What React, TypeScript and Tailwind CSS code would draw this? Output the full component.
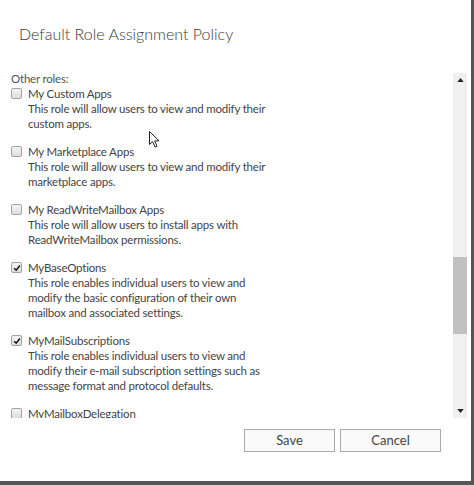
import React from 'react';

type Role = { name: string; lines: string[]; checked: boolean };

const roles: Role[] = [
  { name: 'My Custom Apps', lines: ['This role will allow users to view and modify their', 'custom apps.'], checked: false },
  { name: 'My Marketplace Apps', lines: ['This role will allow users to view and modify their', 'marketplace apps.'], checked: false },
  { name: 'My ReadWriteMailbox Apps', lines: ['This role will allow users to install apps with', 'ReadWriteMailbox permissions.'], checked: false },
  {
    name: 'MyBaseOptions',
    lines: ['This role enables individual users to view and', 'modify the basic configuration of their own', 'mailbox and associated settings.'],
    checked: true,
  },
  {
    name: 'MyMailSubscriptions',
    lines: ['This role enables individual users to view and', 'modify their e-mail subscription settings such as', 'message format and protocol defaults.'],
    checked: true,
  },
  { name: 'MyMailboxDelegation', lines: ['This role enables users to delegate mailbox', 'permissions.'], checked: false },
];

const Checkbox: React.FC<{ checked: boolean }> = ({ checked }) => (
  <span className="mt-[2px] flex h-[11px] w-[11px] shrink-0 items-center justify-center rounded-[2px] border border-[#a3a3a3] bg-gradient-to-b from-[#f4f4f4] to-[#dedede]">
    {checked && (
      <svg viewBox="0 0 10 10" className="h-[8px] w-[8px]">
        <path d="M1.5 5.2 L4 7.8 L8.6 1.8" fill="none" stroke="#111" strokeWidth={1.8} />
      </svg>
    )}
  </span>
);

const App: React.FC = () => {
  return (
    <div
      className="relative flex h-[485px] w-[474px] flex-col border-r-[3px] border-b-[4px] border-[#555] bg-white text-[#444]"
      style={{ fontFamily: 'Lato, "Open Sans", sans-serif' }}
    >
      {/* Title */}
      <div className="h-[73px] pl-[19px] pt-[24px]">
        <h1 className="text-[16px] font-light leading-[20px] text-[#3a3a3a]">Default Role Assignment Policy</h1>
      </div>

      {/* Scrolling list */}
      <div className="flex h-[345px]">
        <div className="flex-1 overflow-hidden pl-[11px] text-[11.5px] leading-[15px] tracking-[-0.2px]">
          <div className="-mt-[2px]">
            <p className="text-[#555]">Other roles:</p>
            <div className="flex flex-col gap-[13px]">
              {roles.map(role => (
                <div key={role.name} className="flex gap-[6px]">
                  <Checkbox checked={role.checked} />
                  <div>
                    <p>{role.name}</p>
                    {role.lines.map(line => (
                      <p key={line}>{line}</p>
                    ))}
                  </div>
                </div>
              ))}
            </div>
          </div>
        </div>

        {/* Scrollbar */}
        <div className="mr-[4px] flex w-[14px] flex-col bg-[#f0f0f0]">
          <div className="flex h-[14px] items-center justify-center">
            <svg viewBox="0 0 8 5" className="h-[4px] w-[7px]">
              <path d="M0 5 L4 0 L8 5 Z" fill="#222" />
            </svg>
          </div>
          <div className="h-[170px]" />
          <div className="h-[77px] bg-[#c1c1c1]" />
          <div className="flex-1" />
          <div className="flex h-[14px] items-center justify-center">
            <svg viewBox="0 0 8 5" className="h-[4px] w-[7px]">
              <path d="M0 0 L8 0 L4 5 Z" fill="#222" />
            </svg>
          </div>
        </div>
      </div>

      {/* Buttons */}
      <div className="flex justify-end gap-[5px] pr-[30px] pt-[11px]">
        <button className="h-[23px] w-[91px] border border-[#ababab] bg-[#fafafa] text-[13px] text-[#444]">Save</button>
        <button className="h-[23px] w-[101px] border border-[#ababab] bg-[#fafafa] text-[13px] text-[#444]">Cancel</button>
      </div>

      {/* Mouse pointer */}
      <svg viewBox="0 0 12 17" className="absolute left-[149px] top-[131px] h-[17px] w-[12px]">
        <path d="M0.5 0.5 L0.5 13.5 L3.6 10.6 L6 16 L8 15.2 L5.7 9.9 L10 9.9 Z" fill="#fff" stroke="#222" strokeWidth={1} strokeLinejoin="round" />
      </svg>
    </div>
  );
};

export default App;
